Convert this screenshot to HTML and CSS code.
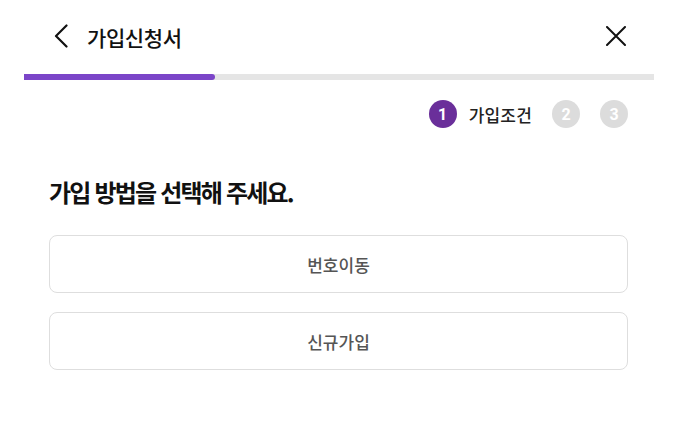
FILE: index.html
```html
<!DOCTYPE html>
<html lang="ko">
<head>
    <meta charset="UTF-8">
    <meta name="viewport" content="width=device-width, initial-scale=1.0">
    <title>가입신청서</title>
    <link rel="stylesheet" href="styles.css">
</head>
<body>
    <div class="page">
        <div class="header">
            <div class="header-left">
                <button class="icon-btn back-btn">
                    <svg width="14" height="24" viewBox="0 0 14 24"><path d="M12.5 1.5L2 12L12.5 22.5" fill="none" stroke="#111" stroke-width="2.2" stroke-linecap="round" stroke-linejoin="round"/></svg>
                </button>
                <h1 class="title">가입신청서</h1>
            </div>
            <button class="icon-btn close-btn">
                <svg width="20" height="20" viewBox="0 0 20 20"><path d="M1 1L19 19M19 1L1 19" fill="none" stroke="#111" stroke-width="2" stroke-linecap="round"/></svg>
            </button>
        </div>

        <div class="progress">
            <div class="progress-fill" style="width: 30.3%"></div>
        </div>

        <div class="steps">
            <span class="step active">1</span>
            <span class="step-label">가입조건</span>
            <span class="step">2</span>
            <span class="step">3</span>
        </div>

        <div class="content">
            <h2 class="question">가입 방법을 선택해 주세요.</h2>
            <button class="option">번호이동</button>
            <button class="option">신규가입</button>
        </div>
    </div>
</body>
</html>
```

FILE: styles.css
```css
body {
    margin: 0;
    padding: 0;
    background-color: #fff;
    font-family: "Noto Sans CJK KR", "Noto Sans", sans-serif;
    color: #111;
}
.page {
    margin: 0 29px 0 24px;
}
.header {
    height: 74px;
    display: flex;
    justify-content: space-between;
    align-items: center;
}
.header-left {
    display: flex;
    align-items: center;
}
.icon-btn {
    background: none;
    border: none;
    padding: 0;
    cursor: pointer;
    display: flex;
}
.back-btn {
    margin-left: 30px;
    margin-top: -3px;
}
.title {
    margin: 0 0 0 19px;
    font-size: 21px;
    font-weight: 500;
    letter-spacing: -0.4px;
    color: #111;
}
.close-btn {
    margin-right: 28px;
    margin-top: -3px;
}
.progress {
    height: 6px;
    background-color: #e5e5e5;
}
.progress-fill {
    height: 100%;
    background-color: #7b45c8;
    border-radius: 0 3px 3px 0;
}
.steps {
    margin-top: 20px;
    margin-right: 26px;
    display: flex;
    justify-content: flex-end;
    align-items: center;
    gap: 20px;
}
.step {
    width: 28px;
    height: 28px;
    border-radius: 50%;
    background-color: #dcdcdc;
    color: #fff;
    font-family: Roboto, sans-serif;
    font-size: 16px;
    font-weight: 700;
    display: flex;
    justify-content: center;
    align-items: center;
}
.step.active {
    background-color: #6a2f9a;
    margin-right: -8px;
}
.step-label {
    font-size: 17px;
    font-weight: 500;
    letter-spacing: 0.2px;
    color: #222;
}
.content {
    margin: 48px 26px 0 25px;
}
.question {
    margin: 0 0 27px;
    font-size: 24px;
    font-weight: 700;
    line-height: 32px;
    letter-spacing: -1.8px;
    color: #111;
}
.option {
    display: block;
    width: 100%;
    height: 58px;
    margin-bottom: 19px;
    background: #fff;
    border: 1px solid #dedede;
    border-radius: 8px;
    font-family: "Noto Sans CJK KR", "Noto Sans", sans-serif;
    font-size: 17px;
    font-weight: 500;
    color: #555;
    cursor: pointer;
}
```
